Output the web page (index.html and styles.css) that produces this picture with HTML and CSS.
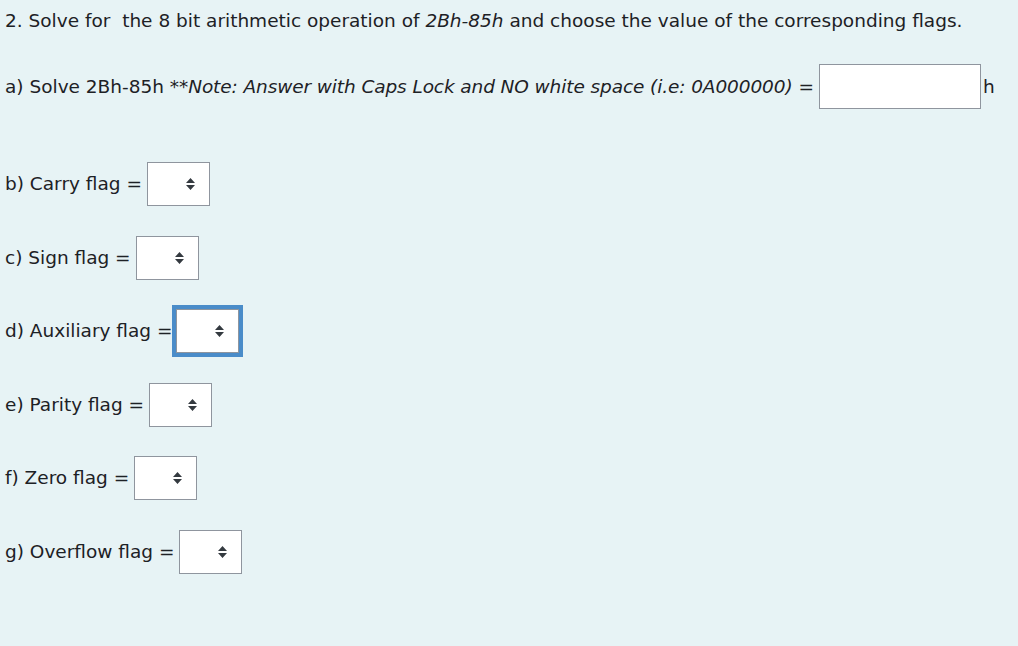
FILE: index.html
```html
<!DOCTYPE html>
<html lang="en">
  <head>
    <meta charset="utf-8" />
    <title>Question 2</title>
    <link rel="stylesheet" href="styles.css">
  </head>
  <body>
    <!-- Question text -->
    <div class="qtext">
      2. Solve for&nbsp; the 8 bit arithmetic operation of <em>2Bh-85h</em> and choose the value of the corresponding flags.
    </div>

    <!-- a) answer box -->
    <div class="answer-row">
      <span>a) Solve 2Bh-85h <em class="note">**Note: Answer with Caps Lock and NO white space (i.e: 0A000000)</em> =</span>
      <input type="text" class="answer" aria-label="Answer">
      <span class="unit">h</span>
    </div>

    <!-- Flag selects -->
    <div class="flags">
      <div class="flag"><span>b) Carry flag =</span><span class="select"><svg width="9" height="12" viewBox="0 0 9 12"><path d="M4.5 0 L9 5 H0 Z M0 7 H9 L4.5 12 Z" /></svg></span></div>
      <div class="flag"><span>c) Sign flag =</span><span class="select"><svg width="9" height="12" viewBox="0 0 9 12"><path d="M4.5 0 L9 5 H0 Z M0 7 H9 L4.5 12 Z" /></svg></span></div>
      <div class="flag"><span>d) Auxiliary flag =</span><span class="select focused"><svg width="9" height="12" viewBox="0 0 9 12"><path d="M4.5 0 L9 5 H0 Z M0 7 H9 L4.5 12 Z" /></svg></span></div>
      <div class="flag"><span>e) Parity flag =</span><span class="select"><svg width="9" height="12" viewBox="0 0 9 12"><path d="M4.5 0 L9 5 H0 Z M0 7 H9 L4.5 12 Z" /></svg></span></div>
      <div class="flag"><span>f) Zero flag =</span><span class="select"><svg width="9" height="12" viewBox="0 0 9 12"><path d="M4.5 0 L9 5 H0 Z M0 7 H9 L4.5 12 Z" /></svg></span></div>
      <div class="flag"><span>g) Overflow flag =</span><span class="select"><svg width="9" height="12" viewBox="0 0 9 12"><path d="M4.5 0 L9 5 H0 Z M0 7 H9 L4.5 12 Z" /></svg></span></div>
    </div>
  </body>
</html>
```

FILE: styles.css
```css
/* Page */
body {
  margin: 0;
  padding: 9px 5px;
  background: #e7f3f5;
  color: #1d2125;
  font-family: "DejaVu Sans", sans-serif;
  font-size: 18.5px;
  line-height: 24px;
}

.qtext {
  margin-bottom: 31px;
}

/* a) row with the text input */
.answer-row {
  display: flex;
  align-items: center;
}
.note {
  letter-spacing: -0.1px;
}
.answer {
  width: 162px;
  height: 45px;
  box-sizing: border-box;
  border: 1px solid #8f959e;
  background: #fff;
  margin: 0 2px 0 5px;
}

/* Flag rows */
.flags {
  margin-top: 53px;
}
.flag {
  display: flex;
  align-items: center;
  gap: 5px;
  height: 44px;
  margin-bottom: 29.6px;
}
.select {
  box-sizing: border-box;
  width: 63px;
  height: 44px;
  border: 1px solid #8f959e;
  background: #fff;
  display: flex;
  align-items: center;
  padding-left: 38px;
}
.select svg {
  fill: #343a40;
}
.select.focused {
  outline: 4px solid #4a8cc9;
  margin-left: -1px;
}
```
